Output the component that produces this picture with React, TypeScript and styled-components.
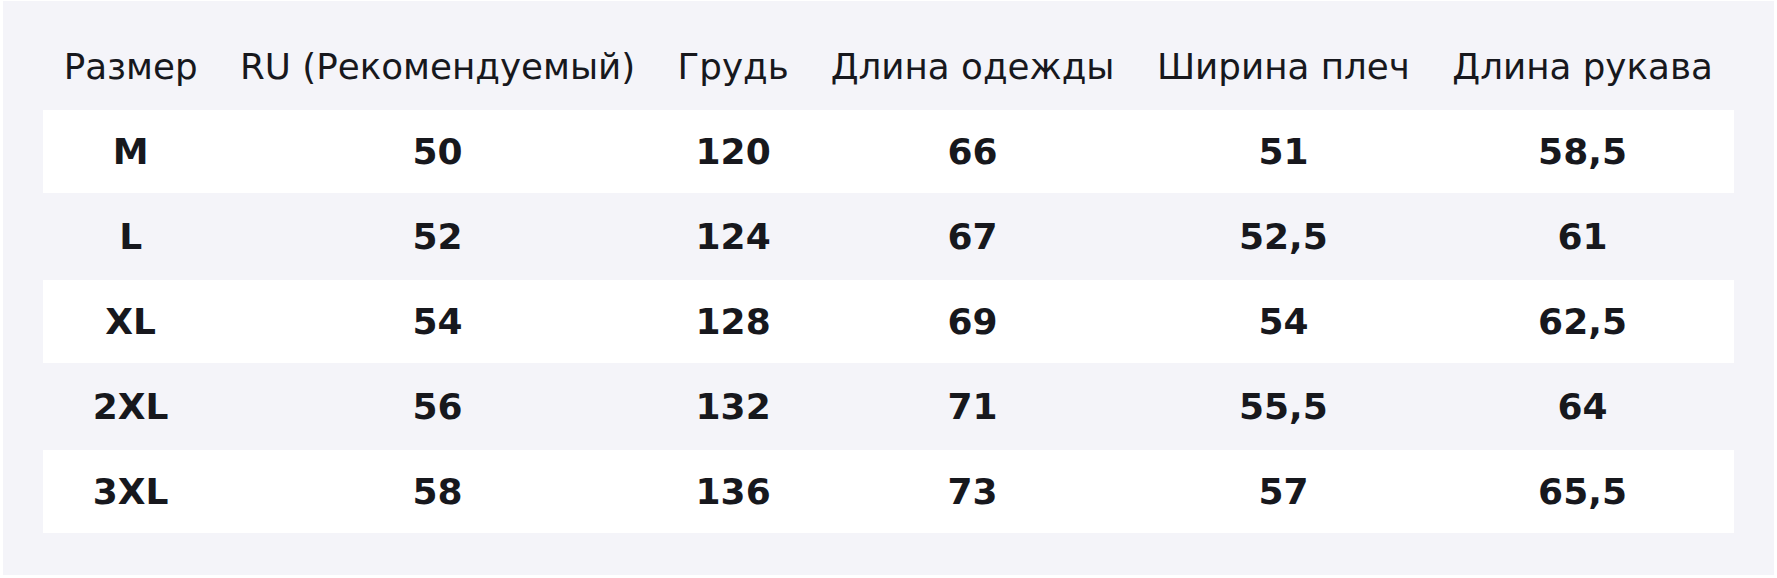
import React from 'react';
import styled, { createGlobalStyle } from 'styled-components';

const GlobalStyle = createGlobalStyle`
	html, body {
		margin: 0;
		padding: 0;
		background: #ffffff;
	}
	body {
		font-family: 'DejaVu Sans', 'Noto Sans', sans-serif;
		color: #17181d;
	}
`;

const columns = [
	'Размер',
	'RU (Рекомендуемый)',
	'Грудь',
	'Длина одежды',
	'Ширина плеч',
	'Длина рукава',
];

const rows = [
	['M', '50', '120', '66', '51', '58,5'],
	['L', '52', '124', '67', '52,5', '61'],
	['XL', '54', '128', '69', '54', '62,5'],
	['2XL', '56', '132', '71', '55,5', '64'],
	['3XL', '58', '136', '73', '57', '65,5'],
];

export default function App() {
	return (
		<>
			<GlobalStyle />
			<Page>
				<Card>
					<SizeTable>
						<thead>
							<tr>
								{columns.map(title => (
									<HeadCell key={title}>{title}</HeadCell>
								))}
							</tr>
						</thead>
						<tbody>
							{rows.map((row, i) => (
								<BodyRow key={row[0]} $striped={i % 2 === 0}>
									{row.map((value, j) => (
										<BodyCell key={j}>{value}</BodyCell>
									))}
								</BodyRow>
							))}
						</tbody>
					</SizeTable>
				</Card>
			</Page>
		</>
	);
}

const Page = styled.div`
	padding: 3px;
	width: 1777px;
	box-sizing: border-box;
`;

const Card = styled.div`
	background: #f4f4f9;
	padding: 0 40px 42px;
`;

const SizeTable = styled.table`
	width: 100%;
	border-collapse: separate;
	border-spacing: 0 2px;
	margin-top: -2px;
	margin-bottom: -2px;
`;

const HeadCell = styled.th`
	height: 105px;
	padding: 0 20px 23px;
	box-sizing: border-box;
	font-size: 35.7px;
	font-weight: 400;
	white-space: nowrap;
	text-align: center;
	vertical-align: bottom;
	line-height: 1;
`;

interface IBodyRowProps {
	$striped?: boolean;
}

const BodyRow = styled.tr<IBodyRowProps>`
	background: ${props => (props.$striped ? '#ffffff' : 'transparent')};
`;

const BodyCell = styled.td`
	height: 83px;
	padding: 0 20px;
	box-sizing: border-box;
	font-size: 36px;
	font-weight: 700;
	text-align: center;
	vertical-align: middle;
	white-space: nowrap;
`;
